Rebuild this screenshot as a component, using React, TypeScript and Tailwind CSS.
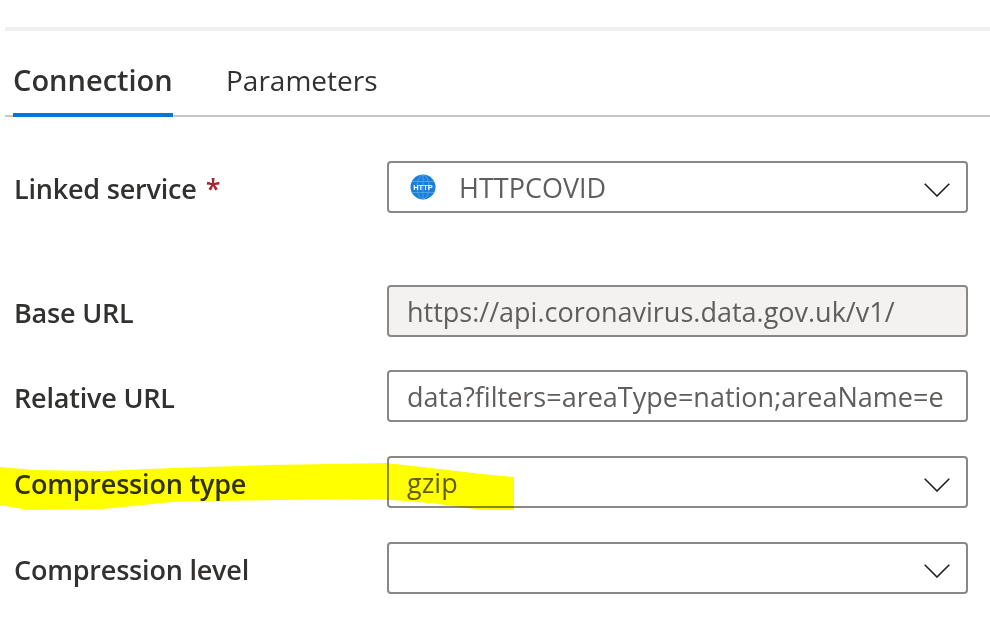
import type { ReactNode } from "react";

const fieldBase =
  "w-[581px] h-[52px] flex items-center rounded-[4px] border-2 border-[#8a8886] pl-[18px] pr-[16px] text-[27px] text-[#605e5c] overflow-hidden";

function HttpIcon() {
  return (
    <svg width="26" height="26" viewBox="0 0 26 26" className="shrink-0">
      <circle cx="13" cy="13" r="12.5" fill="#1a7fdc" />
      <g fill="none" stroke="#6db2ee" strokeWidth="0.6">
        <ellipse cx="13" cy="13" rx="6" ry="12" />
        <path d="M2 7.5h22M2 18.5h22M13 1v24" />
      </g>
      <text x="13" y="15.6" textAnchor="middle" fontSize="7.5" fontWeight="700" fill="#fff" fontFamily="'Liberation Sans', sans-serif">
        HTTP
      </text>
    </svg>
  );
}

function Row({ label, required, className, children }: { label: string; required?: boolean; className: string; children: ReactNode }) {
  return (
    <div className={`flex items-center justify-between ${className}`}>
      <label className="text-[27px] font-semibold tracking-[-0.2px] text-[#323130] pl-[9px] leading-[36px] pt-[4px]">
        {label}
        {required && <span className="text-[#a4262c] ml-[9px]">*</span>}
      </label>
      {children}
    </div>
  );
}

function Chevron() {
  return (
    <svg width="26" height="14" viewBox="0 0 26 14" className="ml-auto shrink-0 mt-[5px]">
      <path d="M0.7 0.7 L13 13 L25.3 0.7" fill="none" stroke="#201f1e" strokeWidth="1.6" />
    </svg>
  );
}

export default function App() {
  return (
    <div className="relative w-[990px] h-[643px] bg-white overflow-hidden pt-[27px] pl-[5px]" style={{ fontFamily: "'Open Sans', 'Noto Sans', sans-serif" }}>
      <div className="h-[4px] bg-[#efefef]" />

      {/* Tabs */}
      <div className="flex h-[86px] border-b-2 border-[#c8c6c4] pl-[8px] gap-[53px]">
        <div className="h-[86px] border-b-4 border-[#0078d4] w-[160px] pt-[29px] text-[29px] leading-[40px] font-semibold whitespace-nowrap text-[#323130]">
          Connection
        </div>
        <div className="pt-[29px] text-[28px] leading-[40px] text-[#323130]">Parameters</div>
      </div>

      {/* Form */}
      <div className="w-[963px] pt-[44px] flex flex-col">
        <Row label="Linked service" required className="">
          <div className={fieldBase}>
            <span className="ml-[3px] mr-[23px] flex"><HttpIcon /></span>
            <span className="pt-[2px]">HTTPCOVID</span>
            <Chevron />
          </div>
        </Row>
        <Row label="Base URL" className="mt-[72px]">
          <div className={`${fieldBase} bg-[#f3f2f1]`}>
            <span className="whitespace-nowrap pt-[2px]">https://api.coronavirus.data.gov.uk/v1/</span>
          </div>
        </Row>
        <Row label="Relative URL" className="mt-[33px]">
          <div className={fieldBase}>
            <span className="whitespace-nowrap pt-[3px]">data?filters=areaType=nation;areaName=e</span>
          </div>
        </Row>
        <Row label="Compression type" className="mt-[34px]">
          <div className={fieldBase}>
            <span className="pt-[3px]">gzip</span>
            <Chevron />
          </div>
        </Row>
        <Row label="Compression level" className="mt-[34px]">
          <div className={fieldBase}>
            <Chevron />
          </div>
        </Row>
      </div>

      {/* Highlighter stroke over the compression type row */}
      <svg width="990" height="643" className="absolute left-0 top-0 pointer-events-none mix-blend-multiply">
        <path
          d="M0 467 L34 470 L103 471 L172 468 L269 465 L386 463 L430 468 L482 474 L514 477 L514 510 L482 510 L430 503 L379 499 L275 500 L172 502 L103 509 L28 510 L0 505 Z"
          fill="#ffff00"
        />
      </svg>
    </div>
  );
}
